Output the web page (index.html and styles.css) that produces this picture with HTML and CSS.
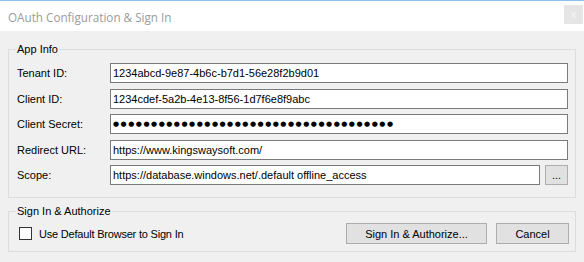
FILE: index.html
```html
<!DOCTYPE html>
<html>
<head>
<meta charset="utf-8">
<link rel="stylesheet" href="styles.css">
</head>
<body>
<div class="window">
  <div class="titlebar">
    <span class="title">OAuth Configuration &amp; Sign In</span>
    <span class="close">x</span>
  </div>
  <div class="content">
    <div class="group group-app">
      <span class="legend">App Info</span>
      <div class="form">
        <label class="label">Tenant ID:</label>
        <div class="field">1234abcd-9e87-4b6c-b7d1-56e28f2b9d01</div>
        <label class="label">Client ID:</label>
        <div class="field">1234cdef-5a2b-4e13-8f56-1d7f6e8f9abc</div>
        <label class="label">Client Secret:</label>
        <div class="field secret">●●●●●●●●●●●●●●●●●●●●●●●●●●●●●●●●●●●●●</div>
        <label class="label">Redirect URL:</label>
        <div class="field">https://www.kingswaysoft.com/</div>
        <label class="label">Scope:</label>
        <div class="scope-row">
          <div class="field grow">https://database.windows.net/.default offline_access</div>
          <button class="btn btn-dots">...</button>
        </div>
      </div>
    </div>
    <div class="group group-sign">
      <span class="legend">Sign In &amp; Authorize</span>
      <div class="sign-row">
        <label class="check"><span class="box"></span>Use Default Browser to Sign In</label>
        <div class="buttons">
          <button class="btn btn-sign">Sign In &amp; Authorize...</button>
          <button class="btn btn-cancel">Cancel</button>
        </div>
      </div>
    </div>
  </div>
</div>
</body>
</html>
```
FILE: styles.css
```css
html, body {
  margin: 0;
  padding: 0;
  background: #f0f0f0;
}
body {
  width: 584px;
  height: 262px;
  overflow: hidden;
  font-family: "Liberation Sans", Arial, sans-serif;
  font-size: 11px;
  color: #000;
}
.window {
  width: 584px;
  height: 262px;
  background: #f0f0f0;
}
.titlebar {
  height: 30px;
  border-top: 1px solid #8fbfea;
  background: #fff;
  display: flex;
  align-items: center;
  justify-content: space-between;
  padding-left: 8px;
  padding-right: 1px;
}
.title {
  font-family: "Open Sans", "Liberation Sans", sans-serif;
  font-size: 11.7px;
  color: #9b9b9b;
  margin-top: 1px;
}
.close {
  width: 19px;
  height: 19px;
  margin-top: -3px;
  background: #e5e5e5;
  color: #f6f6f6;
  font-size: 11px;
  line-height: 18px;
  text-align: center;
}
.content {
  padding: 18px 8px 0 8px;
}
.group {
  position: relative;
  border: 1px solid #dcdcdc;
}
.legend {
  position: absolute;
  top: -7px;
  left: 7px;
  padding: 0 1px 0 1px;
  background: #f0f0f0;
  line-height: 13px;
}
.group-app {
  padding: 13px 7px 12px 8px;
}
.form {
  display: grid;
  grid-template-columns: 93px 1fr;
  grid-auto-rows: 20px;
  row-gap: 5.5px;
  align-items: center;
}
.label {
  line-height: 20px;
}
.field {
  height: 20px;
  box-sizing: border-box;
  border: 1px solid #7a7a7a;
  background: #fff;
  padding: 0 2px;
  line-height: 18px;
  white-space: nowrap;
  overflow: hidden;
}
.secret {
  font-family: "DejaVu Sans", sans-serif;
  font-size: 7px;
  letter-spacing: 1.5px;
}
.scope-row {
  display: flex;
  gap: 5px;
  height: 20px;
}
.grow {
  flex: 1;
}
.btn {
  font-family: "Liberation Sans", Arial, sans-serif;
  font-size: 11px;
  color: #000;
  background: #e1e1e1;
  border: 1px solid #adadad;
  padding: 0;
  margin: 0;
  box-sizing: border-box;
}
.btn-dots {
  width: 23px;
  height: 20px;
  line-height: 14px;
}
.group-sign {
  margin-top: 13px;
  padding: 11px 6px 7px 10px;
}
.sign-row {
  display: flex;
  align-items: center;
  justify-content: space-between;
  height: 21px;
}
.check {
  display: flex;
  align-items: center;
  gap: 7px;
  letter-spacing: -0.2px;
}
.box {
  width: 13px;
  height: 13px;
  box-sizing: border-box;
  border: 1px solid #333;
  background: #fff;
}
.buttons {
  display: flex;
  gap: 9px;
}
.btn-sign {
  width: 141px;
  height: 21px;
}
.btn-cancel {
  width: 73px;
  height: 21px;
}
```
